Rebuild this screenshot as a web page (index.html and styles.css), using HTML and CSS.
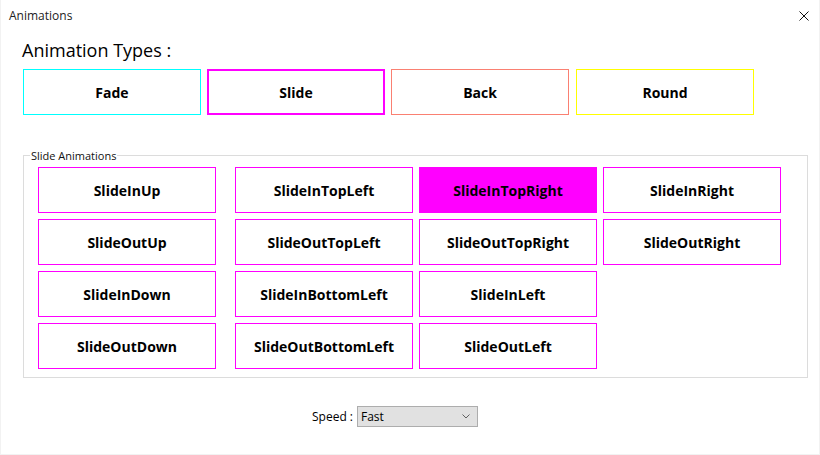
FILE: index.html
```html
<!DOCTYPE html>
<html>
<head>
<meta charset="utf-8">
<title>Animations</title>
<link rel="stylesheet" href="styles.css">
</head>
<body>
<div class="window">
  <div class="titlebar">
    <span class="title">Animations</span>
    <svg class="close" width="10" height="10" viewBox="0 0 10 10"><path d="M0.5 0.5 L9.5 9.5 M9.5 0.5 L0.5 9.5" stroke="#111" stroke-width="1" fill="none"/></svg>
  </div>
  <h1 class="heading">Animation Types :</h1>
  <div class="types">
    <button class="type type-fade">Fade</button>
    <button class="type type-slide">Slide</button>
    <button class="type type-back">Back</button>
    <button class="type type-round">Round</button>
  </div>
  <fieldset class="group">
    <legend class="group-label">Slide Animations</legend>
    <div class="grid">
      <button class="anim c1">SlideInUp</button>
      <button class="anim c2">SlideInTopLeft</button>
      <button class="anim c3 selected">SlideInTopRight</button>
      <button class="anim c4">SlideInRight</button>
      <button class="anim c1">SlideOutUp</button>
      <button class="anim c2">SlideOutTopLeft</button>
      <button class="anim c3">SlideOutTopRight</button>
      <button class="anim c4">SlideOutRight</button>
      <button class="anim c1">SlideInDown</button>
      <button class="anim c2">SlideInBottomLeft</button>
      <button class="anim c3">SlideInLeft</button>
      <button class="anim c1">SlideOutDown</button>
      <button class="anim c2">SlideOutBottomLeft</button>
      <button class="anim c3">SlideOutLeft</button>
    </div>
  </fieldset>
  <div class="speed">
    <span class="speed-label">Speed :</span>
    <div class="combo">
      <span class="combo-value">Fast</span>
      <svg class="chev" width="8" height="5" viewBox="0 0 8 5"><path d="M0.5 0.5 L4 4 L7.5 0.5" stroke="#606060" stroke-width="1" fill="none"/></svg>
    </div>
  </div>
</div>
</body>
</html>
```
FILE: styles.css
```css
html, body {
  margin: 0;
  padding: 0;
  background: #ffffff;
}
.window {
  width: 820px;
  height: 455px;
  box-sizing: border-box;
  border: 1px solid #f2f2f2;
  border-top: none;
  font-family: "Open Sans", "Noto Sans", sans-serif;
  color: #000;
  overflow: hidden;
}
.titlebar {
  height: 31px;
  display: flex;
  align-items: center;
  justify-content: space-between;
  padding: 0 10px 0 8px;
}
.title {
  font-size: 12px;
  color: #222;
}
.close {
  display: block;
}
.heading {
  margin: 7px 0 0 21px;
  font-size: 18px;
  line-height: 24px;
  font-weight: 400;
  height: 24px;
}
.types {
  display: flex;
  gap: 6px;
  margin: 7px 0 0 22px;
}
.type {
  width: 178px;
  height: 46px;
  box-sizing: border-box;
  background: #fff;
  font-family: "Open Sans", "Noto Sans", sans-serif;
  font-size: 14px;
  font-weight: 700;
  color: #000;
  padding: 0;
  margin: 0;
  border: 1px solid;
}
.type-fade { border-color: #00ffff; }
.type-slide { border: 2px solid #ff00ff; }
.type-back { border-color: #fa8072; }
.type-round { border-color: #ffff00; margin-left: 1px; }
.group {
  margin: 33px 0 0 22px;
  width: 785px;
  box-sizing: border-box;
  border: 1px solid #dcdcdc;
  padding: 0 0 8px 0;
}
.group-label {
  margin-left: 6px;
  padding: 0 1px;
  font-size: 11px;
  line-height: 15px;
  color: #111;
}
.grid {
  display: grid;
  grid-template-columns: 191px 178px 178px 178px;
  grid-auto-rows: 46px;
  column-gap: 6px;
  row-gap: 6px;
  margin: 4px 0 0 14px;
}
.anim {
  width: 178px;
  height: 46px;
  box-sizing: border-box;
  border: 1px solid #ff00ff;
  background: #fff;
  font-family: "Open Sans", "Noto Sans", sans-serif;
  font-size: 14px;
  font-weight: 700;
  color: #000;
  padding: 0;
  margin: 0;
}
.c1 { grid-column: 1; }
.c2 { grid-column: 2; }
.c3 { grid-column: 3; }
.c4 { grid-column: 4; }
.anim.selected {
  background: #ff00ff;
}
.speed {
  display: flex;
  align-items: center;
  margin: 28px 0 0 311px;
}
.speed-label {
  font-size: 12px;
  width: 45px;
}
.combo {
  width: 121px;
  height: 21px;
  box-sizing: border-box;
  border: 1px solid #adadad;
  background: #e1e1e1;
  display: flex;
  align-items: center;
  justify-content: space-between;
  padding: 0 7px 0 3px;
}
.combo-value {
  font-size: 12px;
}
.chev {
  display: block;
}
```
